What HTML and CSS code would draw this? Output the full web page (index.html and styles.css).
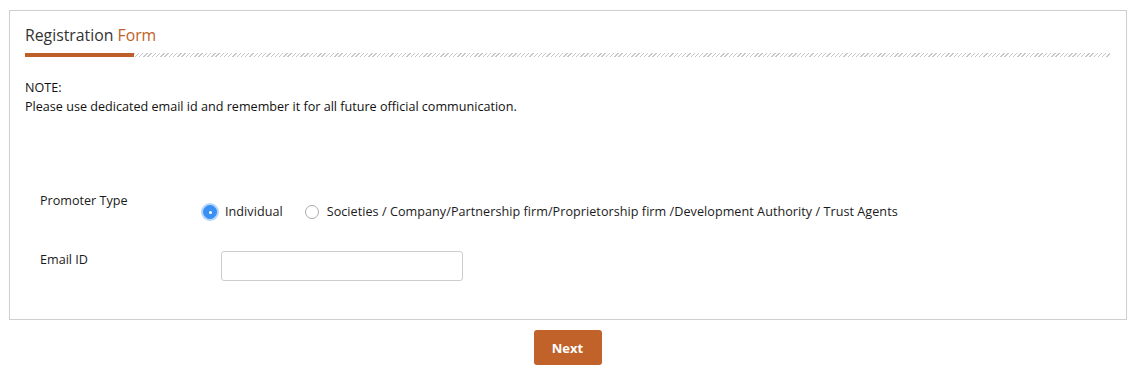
FILE: index.html
```html
<!DOCTYPE html>
<html>
<head>
<meta charset="utf-8">
<link rel="stylesheet" href="styles.css">
</head>
<body>
<div class="panel">
  <h2 class="title">Registration <span class="accent">Form</span></h2>
  <div class="rule"><span class="rule-bar"></span><span class="rule-hatch"></span></div>
  <div class="note">
    <div>NOTE:</div>
    <div>Please use dedicated email id and remember it for all future official communication.</div>
  </div>
  <div class="form">
    <div class="row row-type">
      <div class="label">Promoter Type</div>
      <div class="options">
        <label class="opt"><span class="radio checked"></span>Individual</label>
        <label class="opt"><span class="radio"></span>Societies / Company/Partnership firm/Proprietorship firm /Development Authority / Trust Agents</label>
      </div>
    </div>
    <div class="row row-email">
      <div class="label">Email ID</div>
      <input class="input" type="text">
    </div>
  </div>
</div>
<div class="actions"><button class="btn">Next</button></div>
</body>
</html>
```
FILE: styles.css
```css
* { box-sizing: border-box; }
body {
  margin: 0;
  font-family: "Open Sans", "DejaVu Sans", sans-serif;
  font-size: 12.6px;
  color: #1a1a1a;
  background: #fff;
}
.panel {
  margin: 10px 8px 0 9px;
  border: 1px solid #cfcfcf;
  height: 310px;
  padding: 14px 15px 0 15px;
}
.title {
  margin: 0;
  font-weight: normal;
  font-size: 15.8px;
  color: #333;
  line-height: 20px;
}
.accent { color: #bf5f26; }
.rule {
  display: flex;
  margin-top: 8px;
  height: 4px;
  margin-right: 1px;
}
.rule-bar {
  width: 109px;
  background: #bd5f27;
  height: 4px;
}
.rule-hatch {
  flex: 1;
  height: 4px;
  background: repeating-linear-gradient(135deg, #c8c8c8 0 1px, #fff 1px 3px);
}
.note {
  margin-top: 21px;
  line-height: 19px;
  color: #111;
}
.form {
  margin-top: 76px;
  padding-left: 15px;
}
.row { display: flex; }
.label { width: 163px; color: #1a1a1a; }
.options {
  display: flex;
  gap: 22px;
  padding-top: 11px;
  letter-spacing: 0.05px;
}
.opt { display: flex; align-items: center; }
.radio {
  width: 14px; height: 14px;
  border-radius: 50%;
  border: 1px solid #aaa;
  background: #fff;
  margin-right: 8px;
  display: inline-block;
  position: relative;
}
.radio.checked {
  background: #3a8ff3;
  border-color: #3a8ff3;
  box-shadow: 0 0 0 2px #b6d4fb;
}
.radio.checked::after {
  content: "";
  position: absolute;
  left: 5px; top: 5px;
  width: 3px; height: 3px;
  border-radius: 50%;
  background: #fff;
}
.row-email { margin-top: 31px; }
.input {
  margin-left: 18px;
  margin-top: 0;
  width: 242px;
  height: 30px;
  border: 1px solid #cdcdcd;
  border-radius: 3px;
}
.actions {
  display: flex;
  justify-content: center;
  margin-top: 10px;
}
.btn {
  width: 68px;
  height: 35px;
  background: #c0622a;
  color: #fff;
  border: none;
  border-radius: 3px;
  font-family: "Open Sans", sans-serif;
  font-weight: bold;
  font-size: 13px;
}
```
